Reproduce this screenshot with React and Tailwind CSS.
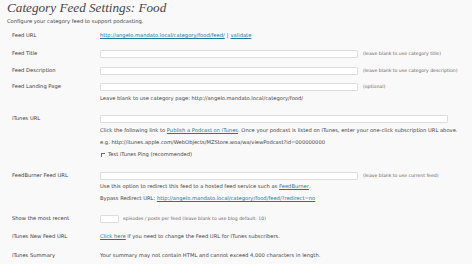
import React from "react";

const body = { fontFamily: '"DejaVu Sans", Verdana, sans-serif' };

function Input({ w }) {
  return <div className={`h-[8px] bg-white border border-[#dddddd] rounded-[1px] ${w}`} />;
}

function Hint({ children }) {
  return <span className="ml-[5px] text-[4.6px] text-[#666] whitespace-nowrap">{children}</span>;
}

function Row({ label, mt, children }) {
  return (
    <div className={`flex ${mt}`}>
      <div className="w-[88px] shrink-0 h-[10px] flex items-center text-[#3a3a3a] whitespace-nowrap">{label}</div>
      <div className="flex flex-col flex-1 min-w-0">{children}</div>
    </div>
  );
}

function Line({ children, mt = "" }) {
  return <div className={`h-[10px] flex items-center whitespace-nowrap ${mt}`}>{children}</div>;
}

export default function App() {
  return (
    <div className="w-[474px] h-[267px] bg-white overflow-hidden">
      <div className="w-[472px] h-[264px] bg-[#f9f9f9] text-[5.2px] text-[#444] leading-none" style={body}>
        <div className="h-[16px] pl-[7px] flex items-center">
          <h1 className="italic text-[13.2px] text-[#464646] leading-none whitespace-nowrap" style={{ fontFamily: '"Liberation Serif", Georgia, serif' }}>
            Category Feed Settings: Food
          </h1>
        </div>
        <div className="pl-[7px] mt-[1px] h-[10px] flex items-center">Configure your category feed to support podcasting.</div>
        <div className="pl-[12px]">
          <Row label="Feed URL" mt="mt-[4px]">
            <Line>
              <span className="text-[#21759b] underline">http://angelo.mandato.local/category/food/feed/</span>
              <span className="mx-[2px]">|</span>
              <span className="text-[#21759b] underline">validate</span>
            </Line>
          </Row>
          <Row label="Feed Title" mt="mt-[8px]">
            <Line><Input w="w-[258px]" /><Hint>(leave blank to use category title)</Hint></Line>
          </Row>
          <Row label="Feed Description" mt="mt-[7px]">
            <Line><Input w="w-[258px]" /><Hint>(leave blank to use category description)</Hint></Line>
          </Row>
          <Row label="Feed Landing Page" mt="mt-[6px]">
            <Line><Input w="w-[258px]" /><Hint>(optional)</Hint></Line>
            <Line mt="mt-[2px]">Leave blank to use category page: http://angelo.mandato.local/category/food/</Line>
          </Row>
          <Row label="iTunes URL" mt="mt-[10px]">
            <Line><Input w="w-[348px]" /></Line>
            <Line mt="mt-[2px]">
              Click the following link to&nbsp;<span className="text-[#21759b] underline">Publish a Podcast on iTunes</span>. Once your podcast is listed on iTunes, enter your one-click subscription URL above.
            </Line>
            <Line mt="mt-[2px]">e.g. http://itunes.apple.com/WebObjects/MZStore.woa/wa/viewPodcast?id=000000000</Line>
            <Line mt="mt-[2px]">
              <span className="w-[4px] h-[4px] border-t border-l border-t-[#666] border-l-[#666] bg-white mr-[3px] ml-[1px]" />
              Test iTunes Ping (recommended)
            </Line>
          </Row>
          <Row label="FeedBurner Feed URL" mt="mt-[11px]">
            <Line><Input w="w-[258px]" /><Hint>(leave blank to use current feed)</Hint></Line>
            <Line mt="mt-[1px]">
              Use this option to redirect this feed to a hosted feed service such as&nbsp;<span className="text-[#21759b] underline">FeedBurner</span>.
            </Line>
            <Line mt="mt-[2px]">
              Bypass Redirect URL:&nbsp;<span className="text-[#21759b] underline">http://angelo.mandato.local/category/food/feed/?redirect=no</span>
            </Line>
          </Row>
          <Row label="Show the most recent" mt="mt-[10px]">
            <Line><Input w="w-[19px]" /><span className="ml-[4px] text-[4.6px] text-[#666]">episodes / posts per feed (leave blank to use blog default: 10)</span></Line>
          </Row>
          <Row label="iTunes New Feed URL" mt="mt-[8px]">
            <Line><span className="text-[#21759b] underline">Click here</span>&nbsp;if you need to change the Feed URL for iTunes subscribers.</Line>
          </Row>
          <Row label="iTunes Summary" mt="mt-[9px]">
            <Line>Your summary may not contain HTML and cannot exceed 4,000 characters in length.</Line>
          </Row>
        </div>
      </div>
    </div>
  );
}
